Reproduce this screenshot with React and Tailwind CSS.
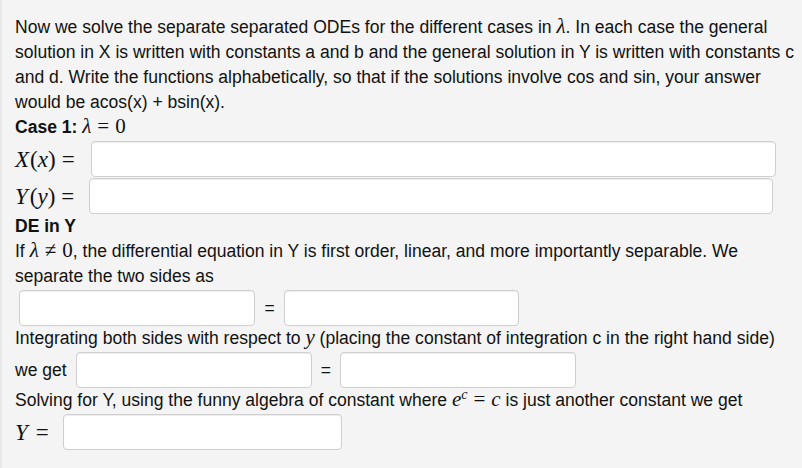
import React from 'react';

const Math = ({ children, size = 'text-[21px] leading-[0]' }) => (
  <span className={`font-['Liberation_Serif',serif] ${size}`}>{children}</span>
);

const Eq = () => <span className="mx-[6px] not-italic">=</span>;

const Box = ({ w }) => (
  <input
    type="text"
    className={`${w} h-9 bg-white border border-[#cfcfcf] rounded-[4px] shadow-[inset_0_1px_1px_rgba(0,0,0,0.075)] outline-none`}
  />
);

const Line = ({ children, className = '' }) => (
  <div className={`h-[25px] leading-[25px] whitespace-nowrap ${className}`}>{children}</div>
);

export default function App() {
  return (
    <div className="min-h-screen bg-[#f4f4f4] border-l-2 border-[#e8e8e8] pl-[13px] pt-[15px] text-[17.55px] text-[#111] font-['Liberation_Sans',Arial,sans-serif]">
      <Line>
        Now we solve the separate separated ODEs for the different cases in <Math><i>λ</i></Math>. In each case the general
      </Line>
      <Line>solution in X is written with constants a and b and the general solution in Y is written with constants c</Line>
      <Line>and d. Write the functions alphabetically, so that if the solutions involve cos and sin, your answer</Line>
      <Line>would be acos(x) + bsin(x).</Line>
      <Line>
        <b>Case 1:</b> <Math><i>λ</i><Eq />0</Math>
      </Line>

      <div className="flex items-center h-[37px] pt-px">
        <Math size="text-[23px] leading-none">
          <i className="pr-px">X</i>(<i>x</i>)<Eq />
        </Math>
        <span className="ml-[10px] flex"><Box w="w-[685px]" /></span>
      </div>
      <div className="flex items-center h-[37px] pt-px">
        <Math size="text-[23px] leading-none">
          <i className="pr-[2px]">Y</i>(<i>y</i>)<Eq />
        </Math>
        <span className="ml-[9px] flex"><Box w="w-[684px]" /></span>
      </div>

      <Line className="font-bold">DE in Y</Line>
      <Line>
        If <Math><i>λ</i><span className="mx-[6px]">≠</span>0</Math>, the differential equation in Y is first order, linear, and more importantly separable. We
      </Line>
      <Line>separate the two sides as</Line>
      <div className="flex items-center h-[37px] pt-px pl-[4px]">
        <Box w="w-[236px]" />
        <span className="px-[9.5px]">=</span>
        <Box w="w-[235px]" />
      </div>

      <Line>
        Integrating both sides with respect to <Math><i>y</i></Math> (placing the constant of integration c in the right hand side)
      </Line>
      <div className="flex items-center h-[37px] pt-px">
        <span>we get</span>
        <span className="ml-[9px] flex"><Box w="w-[236px]" /></span>
        <span className="px-[9px]">=</span>
        <Box w="w-[236px]" />
      </div>

      <Line>
        Solving for Y, using the funny algebra of constant where{' '}
        <Math><i>e</i><sup className="text-[14px]"><i>c</i></sup><Eq /><i>c</i></Math> is just another constant we get
      </Line>
      <div className="flex items-center h-[37px] pt-px">
        <Math size="text-[23px] leading-none">
          <i className="pr-[2px]">Y</i><Eq />
        </Math>
        <span className="ml-[8px] flex"><Box w="w-[279px]" /></span>
      </div>
    </div>
  );
}
